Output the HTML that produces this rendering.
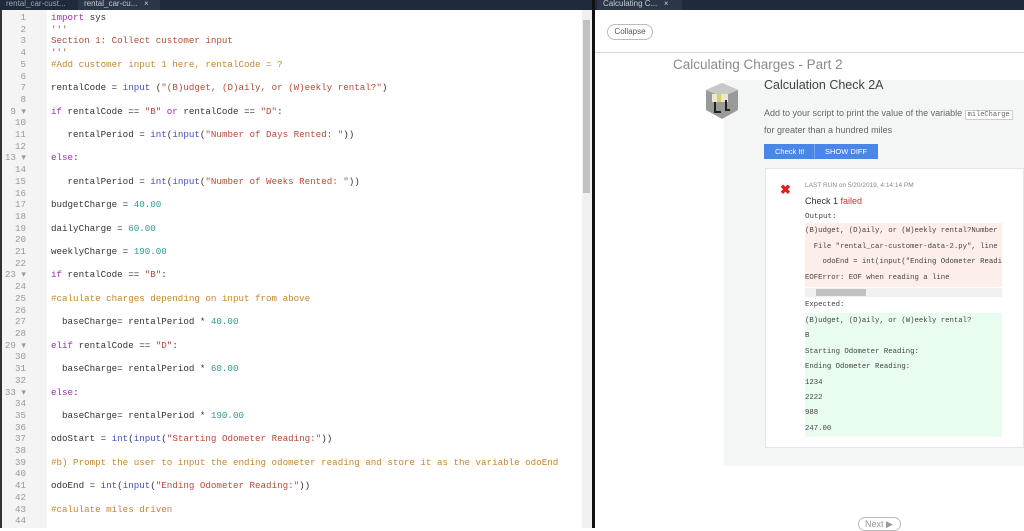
<!DOCTYPE html>
<html><head><meta charset="utf-8"><style>
*{margin:0;padding:0;box-sizing:border-box}
body{width:1024px;height:528px;overflow:hidden;background:#fff;position:relative;font-family:"Liberation Sans",sans-serif}
.abs{position:absolute}
#top{left:0;top:0;width:1024px;height:10px;background:#1f2a3c}
.tab{position:absolute;top:0;height:10px;font-size:8px;color:#c8ccd4;line-height:7px;padding-left:6px;overflow:hidden}
#gut{left:2px;top:10px;width:45px;height:518px;background:#f4f4f4}
#lb{left:0;top:10px;width:2px;height:518px;background:#333}
.code{position:absolute;top:12px;font-family:"Liberation Mono",monospace;font-size:9.2px;line-height:11.7px;white-space:pre;color:#333}
#nums{left:4px;width:22px;text-align:right;color:#999}
#src{left:51px}
.k{color:#9b2fae}.s{color:#b54a3a}.c{color:#c5862b}.n{color:#2f9a8f}.b{color:#4050c0}
#sb{left:582px;top:10px;width:10px;height:518px;background:#f0f0f0}
#th{left:583px;top:20px;width:7px;height:173px;background:#c1c1c1}
#dv{left:592px;top:0;width:3px;height:528px;background:#111}
</style></head><body>
<div id="top" class="abs">
<div class="tab" style="left:0;width:118px;color:#9aa">rental_car-cust...</div>
<div class="tab" style="left:78px;width:82px;background:#2b3648">rental_car-cu... &nbsp; ×</div>
<div class="tab" style="left:597px;width:85px;background:#2b3648">Calculating C... &nbsp; ×</div>
</div>
<div id="lb" class="abs"></div>
<div id="gut" class="abs"></div>
<div id="nums" class="code">1
2
3
4
5
6
7
8
9 ▾
10
11
12
13 ▾
14
15
16
17
18
19
20
21
22
23 ▾
24
25
26
27
28
29 ▾
30
31
32
33 ▾
34
35
36
37
38
39
40
41
42
43
44</div>
<div id="src" class="code"><span class="k">import</span> sys
<span class="s">'''</span>
<span class="s">Section 1: Collect customer input</span>
<span class="s">'''</span>
<span class="c">#Add customer input 1 here, rentalCode = ?</span>

rentalCode = <span class="b">input</span> (<span class="s">"(B)udget, (D)aily, or (W)eekly rental?"</span>)

<span class="k">if</span> rentalCode == <span class="s">"B"</span> <span class="k">or</span> rentalCode == <span class="s">"D"</span>:

   rentalPeriod = <span class="b">int</span>(<span class="b">input</span>(<span class="s">"Number of Days Rented: "</span>))

<span class="k">else</span>:

   rentalPeriod = <span class="b">int</span>(<span class="b">input</span>(<span class="s">"Number of Weeks Rented: "</span>))

budgetCharge = <span class="n">40.00</span>

dailyCharge = <span class="n">60.00</span>

weeklyCharge = <span class="n">190.00</span>

<span class="k">if</span> rentalCode == <span class="s">"B"</span>:

<span class="c">#calulate charges depending on input from above</span>

  baseCharge= rentalPeriod * <span class="n">40.00</span>

<span class="k">elif</span> rentalCode == <span class="s">"D"</span>:

  baseCharge= rentalPeriod * <span class="n">60.00</span>

<span class="k">else</span>:

  baseCharge= rentalPeriod * <span class="n">190.00</span>

odoStart = <span class="b">int</span>(<span class="b">input</span>(<span class="s">"Starting Odometer Reading:"</span>))

<span class="c">#b) Prompt the user to input the ending odometer reading and store it as the variable odoEnd</span>

odoEnd = <span class="b">int</span>(<span class="b">input</span>(<span class="s">"Ending Odometer Reading:"</span>))

<span class="c">#calulate miles driven</span>
</div>
<div id="sb" class="abs"></div><div id="th" class="abs"></div>
<div id="dv" class="abs"></div>

<div class="abs" style="left:607px;top:24px;width:46px;height:16px;border:1px solid #bbb;border-radius:8px;font-size:8px;color:#555;text-align:center;line-height:14px">Collapse</div>
<div class="abs" style="left:595px;top:52px;width:429px;height:1px;background:#d4d8dc"></div>
<div class="abs" style="left:673px;top:57px;font-size:13.5px;color:#8a8a8a">Calculating Charges - Part 2</div>
<div class="abs" style="left:724px;top:80px;width:300px;height:386px;background:#f3f6f4"></div>
<svg class="abs" style="left:698px;top:82px" width="46" height="40" viewBox="0 0 46 40">
<polygon points="8,8 24,1 40,8 40,28 24,37 8,28" fill="#9a9a9a"/>
<polygon points="8,8 24,1 40,8 24,15" fill="#c8c8c8"/>
<rect x="14" y="12" width="16" height="8" fill="#e8e8d8"/>
<rect x="19" y="12" width="4" height="8" fill="#d8d060"/>
<path d="M17 20v10h6M28 18v10h4" stroke="#222" stroke-width="2" fill="none"/>
</svg>
<div class="abs" style="left:764px;top:78px;font-size:12.5px;color:#444">Calculation Check 2A</div>
<div class="abs" style="left:764px;top:106px;font-size:9px;color:#666;line-height:15px;white-space:nowrap">Add to your script to print the value of the variable <span style="font-family:'Liberation Mono',monospace;font-size:7px;border:1px solid #ccc;padding:0 2px;background:#fff">mileCharge</span><br>for greater than a hundred miles</div>
<div class="abs" style="left:764px;top:144px;width:114px;height:15px;background:#4a86e8;font-size:7.5px;color:#fff;line-height:15px">
<span style="position:absolute;left:11px">Check It!</span><span style="position:absolute;left:50px;top:0;width:1px;height:15px;background:#7aa6ee"></span><span style="position:absolute;left:61px">SHOW DIFF</span></div>
<div class="abs" style="left:765px;top:168px;width:259px;height:280px;background:#fff;border:1px solid #e2e6e4"></div>
<div class="abs" style="left:780px;top:182px;font-size:13px;color:#e02020;font-weight:bold">✖</div>
<div class="abs" style="left:805px;top:182px;font-size:6.5px;color:#888">LAST RUN on 5/20/2019, 4:14:14 PM</div>
<div class="abs" style="left:805px;top:196px;font-size:9px;color:#333">Check 1 <span style="color:#c33">failed</span></div>
<div class="abs" style="left:805px;top:210px;font-family:'Liberation Mono',monospace;font-size:7.5px;color:#444;line-height:15.5px;white-space:pre">Output:</div>
<div class="abs" style="left:805px;top:223px;width:197px;height:64px;background:#fdeeea;overflow:hidden;font-family:'Liberation Mono',monospace;font-size:7.3px;color:#444;line-height:15.5px;white-space:pre;padding-top:1px">(B)udget, (D)aily, or (W)eekly rental?Number
  File "rental_car-customer-data-2.py", line
    odoEnd = int(input("Ending Odometer Reading
EOFError: EOF when reading a line</div>
<div class="abs" style="left:805px;top:288px;width:197px;height:9px;background:#f0f0f0"></div>
<div class="abs" style="left:816px;top:289px;width:50px;height:7px;background:#c1c1c1"></div>
<div class="abs" style="left:805px;top:298px;font-family:'Liberation Mono',monospace;font-size:7.3px;color:#444;line-height:15.5px">Expected:</div>
<div class="abs" style="left:805px;top:313px;width:197px;height:124px;background:#e8fcef;font-family:'Liberation Mono',monospace;font-size:7.3px;color:#444;line-height:15.4px;white-space:pre;padding-top:1px">(B)udget, (D)aily, or (W)eekly rental?
B
Starting Odometer Reading:
Ending Odometer Reading:
1234
2222
988
247.00</div>
<div class="abs" style="left:858px;top:517px;width:43px;height:14px;border:1px solid #bbb;border-radius:7px;font-size:9px;color:#999;padding-left:6px;line-height:12px">Next ▶</div>
</body></html>
